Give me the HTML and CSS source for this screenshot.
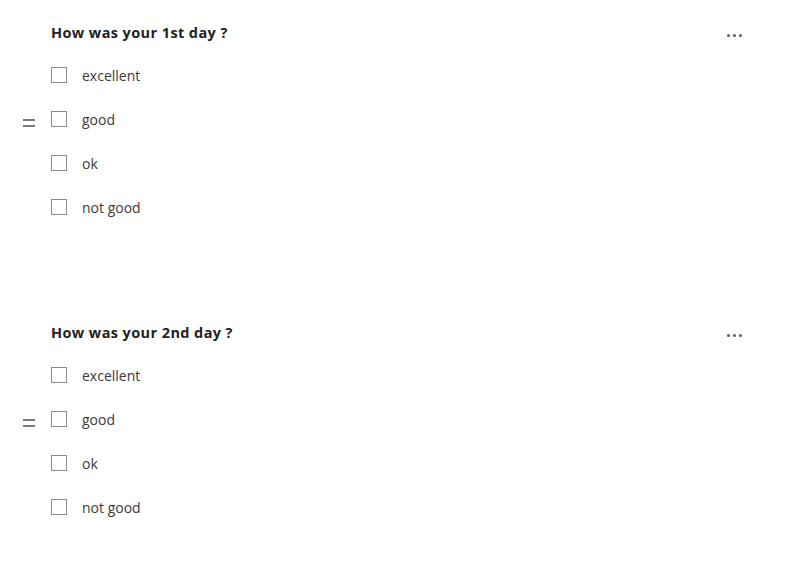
FILE: index.html
```html
<!DOCTYPE html>
<html>
<head>
<meta charset="utf-8">
<link rel="stylesheet" href="styles.css">
</head>
<body>
<div class="survey">
  <section class="question">
    <div class="handle"><span></span><span></span></div>
    <div class="body">
      <div class="header">
        <h2 class="title">How was your 1st day ?</h2>
        <svg class="menu" width="15" height="3" viewBox="0 0 15 3"><circle cx="1.5" cy="1.5" r="1.5"/><circle cx="7.5" cy="1.5" r="1.5"/><circle cx="13.5" cy="1.5" r="1.5"/></svg>
      </div>
      <ul class="options">
        <li class="option"><span class="box"></span><span class="label">excellent</span></li>
        <li class="option"><span class="box"></span><span class="label">good</span></li>
        <li class="option"><span class="box"></span><span class="label">ok</span></li>
        <li class="option"><span class="box"></span><span class="label">not good</span></li>
      </ul>
    </div>
  </section>
  <section class="question">
    <div class="handle"><span></span><span></span></div>
    <div class="body">
      <div class="header">
        <h2 class="title">How was your 2nd day ?</h2>
        <svg class="menu" width="15" height="3" viewBox="0 0 15 3"><circle cx="1.5" cy="1.5" r="1.5"/><circle cx="7.5" cy="1.5" r="1.5"/><circle cx="13.5" cy="1.5" r="1.5"/></svg>
      </div>
      <ul class="options">
        <li class="option"><span class="box"></span><span class="label">excellent</span></li>
        <li class="option"><span class="box"></span><span class="label">good</span></li>
        <li class="option"><span class="box"></span><span class="label">ok</span></li>
        <li class="option"><span class="box"></span><span class="label">not good</span></li>
      </ul>
    </div>
  </section>
</div>
</body>
</html>
```
FILE: styles.css
```css
html, body {
  margin: 0;
  padding: 0;
  background: #fff;
}
body {
  font-family: "Open Sans", "Noto Sans", sans-serif;
  color: #333;
}
.question {
  display: flex;
  height: 300px;
  box-sizing: border-box;
  padding-top: 22px;
}
.handle {
  width: 51px;
  height: 207px;
  display: flex;
  flex-direction: column;
  align-items: flex-start;
  justify-content: center;
  gap: 4px;
  padding-left: 23px;
  padding-bottom: 6px;
  box-sizing: border-box;
}
.handle span {
  display: block;
  width: 12px;
  height: 2px;
  background: #7a7a7a;
}
.body {
  flex: 1;
  padding-right: 46px;
}
.header {
  display: flex;
  justify-content: space-between;
  align-items: flex-start;
  height: 20px;
}
.title {
  margin: 1px 0 0;
  font-size: 14.5px;
  letter-spacing: 0.4px;
  line-height: 20px;
  font-weight: 700;
  color: #222;
}
.menu {
  margin-top: 12px;
  fill: #5c5c5c;
}
.options {
  list-style: none;
  margin: 11px 0 0;
  padding: 0;
}
.option {
  display: flex;
  align-items: center;
  height: 44px;
}
.box {
  width: 16px;
  height: 16px;
  box-sizing: border-box;
  border: 1px solid #8a8a8a;
  margin-right: 15px;
}
.label {
  font-size: 14px;
  line-height: 20px;
  padding-top: 2px;
  color: #3a3a3a;
}
```
